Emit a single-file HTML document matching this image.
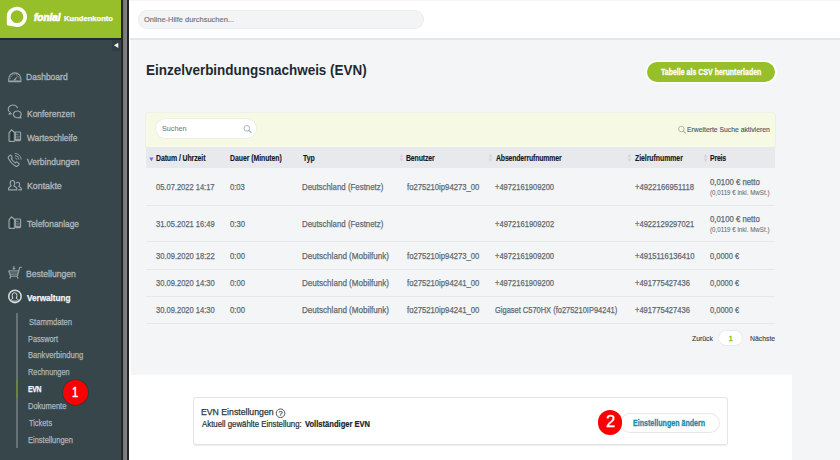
<!DOCTYPE html>
<html><head><meta charset="utf-8"><style>
html,body{margin:0;padding:0;}
body{width:840px;height:460px;overflow:hidden;position:relative;background:#f4f5f7;font-family:"Liberation Sans", sans-serif;}
.b{position:absolute;}
.t{position:absolute;white-space:nowrap;transform-origin:0 0;}
</style></head><body>
<div class="b" style="left:0px;top:0px;width:121px;height:460px;background:#37464b"></div>
<div class="b" style="left:0px;top:0px;width:121px;height:38.2px;background:#97bf2a"></div>
<div class="b" style="left:0px;top:38.2px;width:121px;height:1.8px;background:#1f2a39"></div>
<div class="b" style="left:111.7px;top:40px;width:8.5px;height:11.2px;background:#313f44"></div>
<svg class="b" style="left:0;top:0" width="130" height="60" viewBox="0 0 130 60"><path d="M113.9 45.3 L118.3 42.7 L118.3 47.9 Z" fill="#f2f2f2"/></svg>
<div class="b" style="left:120.5px;top:0px;width:2.1px;height:460px;background:#262626"></div>
<div class="b" style="left:122.6px;top:0px;width:4.6px;height:460px;background:linear-gradient(90deg,#727272,#858585)"></div>
<div class="b" style="left:127.2px;top:0px;width:1.8px;height:460px;background:#232323"></div>
<div class="b" style="left:129px;top:0px;width:711px;height:38.2px;background:#fff"></div>
<div class="b" style="left:129px;top:0px;width:2px;height:460px;background:#fff"></div>
<div class="b" style="left:129px;top:0px;width:711px;height:1px;background:#f6f6f6"></div>
<div class="b" style="left:129.5px;top:38.2px;width:710.5px;height:1.6px;background:#e3e6ea"></div>
<div class="b" style="left:137.5px;top:9.5px;width:286px;height:19.5px;background:#f3f4f6;border-radius:10px;box-shadow:inset 0 0 0 1px #eceef1"></div>
<div class="b" style="left:646.7px;top:61.9px;width:128.5px;height:19.9px;background:#97bf2a;border-radius:10px;box-shadow:0 0 0 1.6px #fff"></div>
<div class="b" style="left:146px;top:112.5px;width:629px;height:34.5px;background:#f6f9e4;border-radius:3px 3px 0 0;box-shadow:0 0 0 0.8px #eceee8"></div>
<div class="b" style="left:156px;top:118.6px;width:100px;height:19px;background:#fff;border-radius:10px;box-shadow:0 0 0 1px #eef1e2"></div>
<svg class="b" style="left:242px;top:124px" width="11" height="10" viewBox="0 0 11 10"><circle cx="4.8" cy="4.4" r="2.8" fill="none" stroke="#9aaab4" stroke-width="0.9"/><path d="M6.9 6.5 L9 8.4" stroke="#9aaab4" stroke-width="1.1" stroke-linecap="round"/></svg>
<svg class="b" style="left:677px;top:125px" width="10" height="10" viewBox="0 0 10 10"><circle cx="4.4" cy="4.0" r="2.8" fill="none" stroke="#aab0a6" stroke-width="0.9"/><path d="M6.4 6.1 L8.6 8.2" stroke="#aab0a6" stroke-width="1.1" stroke-linecap="round"/></svg>
<div class="b" style="left:146px;top:147px;width:629px;height:21px;background:#e7e9ec"></div>
<svg class="b" style="left:148px;top:156px" width="7" height="7" viewBox="0 0 7 7"><path d="M1.2 1.5 L5.6 1.5 L3.4 5.3 Z" fill="#6d6fe0"/></svg>
<svg class="b" style="left:399.1px;top:152.5px" width="5" height="10" viewBox="0 0 5 10"><path d="M0.6 4.3 L2.5 1 L4.4 4.3 Z M0.6 5.5 L2.5 8.9 L4.4 5.5 Z" fill="#d3d6d9"/></svg>
<svg class="b" style="left:488.20000000000005px;top:152.5px" width="5" height="10" viewBox="0 0 5 10"><path d="M0.6 4.3 L2.5 1 L4.4 4.3 Z M0.6 5.5 L2.5 8.9 L4.4 5.5 Z" fill="#d3d6d9"/></svg>
<svg class="b" style="left:627.4px;top:152.5px" width="5" height="10" viewBox="0 0 5 10"><path d="M0.6 4.3 L2.5 1 L4.4 4.3 Z M0.6 5.5 L2.5 8.9 L4.4 5.5 Z" fill="#d3d6d9"/></svg>
<svg class="b" style="left:702.7px;top:152.5px" width="5" height="10" viewBox="0 0 5 10"><path d="M0.6 4.3 L2.5 1 L4.4 4.3 Z M0.6 5.5 L2.5 8.9 L4.4 5.5 Z" fill="#d3d6d9"/></svg>
<div class="b" style="left:146px;top:205px;width:629px;height:1px;background:#e6e9ec"></div>
<div class="b" style="left:146px;top:241px;width:629px;height:1px;background:#e6e9ec"></div>
<div class="b" style="left:146px;top:269px;width:629px;height:1px;background:#e6e9ec"></div>
<div class="b" style="left:146px;top:296px;width:629px;height:1px;background:#e6e9ec"></div>
<div class="b" style="left:146px;top:323px;width:629px;height:1px;background:#e6e9ec"></div>
<div class="b" style="left:717.7px;top:329.9px;width:25.8px;height:15.7px;background:#fff;border-radius:8px;box-shadow:inset 0 0 0 1px #e8eaed"></div>
<div class="b" style="left:129px;top:374.5px;width:663px;height:86px;background:#fff"></div>
<div class="b" style="left:193.3px;top:397.4px;width:535px;height:47.4px;background:#fff;border-radius:3px;box-shadow:inset 0 0 0 1px #e3e5e7, 0 1px 0 #eceeef"></div>
<svg class="b" style="left:275px;top:407.5px" width="11" height="10" viewBox="0 0 11 10"><circle cx="5.55" cy="5.25" r="4.3" fill="none" stroke="#3d4549" stroke-width="0.9"/><text x="5.55" y="7.9" font-family="Liberation Sans" font-size="7.6" text-anchor="middle" fill="#3d4549" stroke="#3d4549" stroke-width="0.2">?</text></svg>
<div class="b" style="left:620px;top:413px;width:99.5px;height:20px;background:#fff;border-radius:10px;box-shadow:inset 0 0 0 1px #e5e8ea"></div>
<div class="b" style="left:597.8px;top:410.2px;width:24.7px;height:24.7px;background:#fa0000;border-radius:50%"></div>
<div class="b" style="left:63.1px;top:379.8px;width:25px;height:25px;background:#fa0000;border-radius:50%;box-shadow:0 0 0 0.8px #2c3a3e"></div>
<div class="b" style="left:16.2px;top:312.8px;width:1.7px;height:134.8px;background:#667276"></div>
<div class="b" style="left:16.2px;top:380.4px;width:1.7px;height:17.3px;background:#6a8739"></div>
<svg class="b" style="left:0;top:0" width="34" height="34" viewBox="0 0 34 34"><path d="M6.75 16.8 L6.9 24.4 Q7 25.2 8 25.4 L14.05 26.5 A10.1 10.1 0 1 0 6.75 16.8 Z M17 10.3 A6.4 6.4 0 1 0 17 23.1 A6.4 6.4 0 1 0 17 10.3 Z" fill="#fff" fill-rule="evenodd"/></svg>
<svg class="b" style="left:6px;top:70px" width="18" height="14" viewBox="6 70 18 14"><path d="M8.7 81.6 L8.7 79 A6.1 6.1 0 0 1 20.9 79 L20.9 81.6 Z" fill="none" stroke="#9ba4a7" stroke-width="1.1" stroke-linejoin="round"/><path d="M9.3 80.4 L20.3 80.4" stroke="#9ba4a7" stroke-width="0.6"/><path d="M10.3 79 A4.5 4.5 0 0 1 19.3 79" fill="none" stroke="#9ba4a7" stroke-width="0.9" stroke-dasharray="1.1 0.9"/><path d="M15.3 80.3 L14.0 79.3 L18.0 75.7 Z" fill="#9ba4a7"/><circle cx="14.65" cy="79.8" r="0.85" fill="#9ba4a7"/></svg>
<svg class="b" style="left:6px;top:103px" width="18" height="17" viewBox="6 103 18 17"><path d="M17.6 108.2 A4.75 4.15 0 1 0 10.3 112.6 L9 114.2 L12 113.7" fill="none" stroke="#9ba4a7" stroke-width="1.15" stroke-linejoin="round"/><path d="M20.1 116.7 A3.95 3.35 0 1 0 18.6 117.5 L21.2 118 Z" fill="none" stroke="#9ba4a7" stroke-width="1.15" stroke-linejoin="round"/></svg>
<svg class="b" style="left:6px;top:128px" width="18" height="16" viewBox="6 128 18 16"><g transform="translate(0 0)"><path d="M11.4 129.8 L14.4 132.3 L14.8 132.8 L14.8 140.4 Q14.8 141.4 13.8 141.4 L10 141.4 Q9 141.4 9 140.4 L9 133.1 L9.4 132.4 Z" fill="none" stroke="#9ba4a7" stroke-width="1.15" stroke-linejoin="round"/><rect x="11" y="132.1" width="1.9" height="8.4" fill="#263236"/><rect x="15.3" y="132" width="5.3" height="8.6" rx="0.8" fill="none" stroke="#9ba4a7" stroke-width="1.15"/><circle cx="16.7" cy="134.3" r="0.55" fill="#9ba4a7"/><circle cx="18" cy="134.3" r="0.55" fill="#9ba4a7"/><path d="M16.1 136.3 H19.8 M16.1 137.9 H19.8" stroke="#9ba4a7" stroke-width="0.55"/><path d="M15.6 139.4 H19.9" stroke="#9ba4a7" stroke-width="1"/></g></svg>
<svg class="b" style="left:6px;top:214.6px" width="18" height="16" viewBox="6 214.6 18 16"><g transform="translate(0 86.6)"><path d="M11.4 129.8 L14.4 132.3 L14.8 132.8 L14.8 140.4 Q14.8 141.4 13.8 141.4 L10 141.4 Q9 141.4 9 140.4 L9 133.1 L9.4 132.4 Z" fill="none" stroke="#9ba4a7" stroke-width="1.15" stroke-linejoin="round"/><rect x="11" y="132.1" width="1.9" height="8.4" fill="#263236"/><rect x="15.3" y="132" width="5.3" height="8.6" rx="0.8" fill="none" stroke="#9ba4a7" stroke-width="1.15"/><circle cx="16.7" cy="134.3" r="0.55" fill="#9ba4a7"/><circle cx="18" cy="134.3" r="0.55" fill="#9ba4a7"/><path d="M16.1 136.3 H19.8 M16.1 137.9 H19.8" stroke="#9ba4a7" stroke-width="0.55"/><path d="M15.6 139.4 H19.9" stroke="#9ba4a7" stroke-width="1"/></g></svg>
<svg class="b" style="left:6px;top:152px" width="18" height="16" viewBox="6 152 18 16"><path d="M10.2 155.2 L8.5 156.6 Q7.9 157.4 8.5 158.8 Q11 163.5 15.6 166.2 Q16.6 166.7 17.4 166 L19 164.6 Q19.4 164.1 18.9 163.6 L17.1 162.1 Q16.6 161.7 16.1 162.1 L15.4 162.8 Q12.9 161.3 11.3 158.7 L12 158 Q12.4 157.4 12 157 L10.9 155.3 Q10.6 154.9 10.2 155.2 Z" fill="none" stroke="#9ba4a7" stroke-width="1.15" stroke-linejoin="round"/><path d="M15.2 157.9 A1.9 1.9 0 0 1 16.8 159.6 M15 155.6 A4.1 4.1 0 0 1 19 159.6 M14.8 153.5 A6.2 6.2 0 0 1 21.2 159.6" fill="none" stroke="#9ba4a7" stroke-width="0.9"/></svg>
<svg class="b" style="left:6px;top:178px" width="18" height="14" viewBox="6 178 18 14"><path d="M12.4 180.5 Q14.6 180.5 14.6 183.2 Q14.6 185 13.8 185.8 L16 187.3 Q16.8 187.8 16.8 188.8 L16.8 189.9 L8.6 189.9 L8.6 188.8 Q8.6 187.8 9.4 187.3 L11.1 185.8 Q10.2 185 10.2 183.2 Q10.2 180.5 12.4 180.5 Z" fill="none" stroke="#9ba4a7" stroke-width="1.15" stroke-linejoin="round"/><path d="M15.9 183.4 Q16.3 182.2 17.9 182.2 Q19.6 182.2 19.6 184.3 Q19.6 185.8 18.9 186.4 L20.7 187.8 Q21.3 188.2 21.3 189 L21.3 189.9 L18.3 189.9" fill="none" stroke="#9ba4a7" stroke-width="1.15" stroke-linejoin="round"/></svg>
<svg class="b" style="left:6px;top:264px" width="18" height="16" viewBox="6 264 18 16"><path d="M8.4 270.9 L19 270.9" stroke="#9ba4a7" stroke-width="1.1"/><path d="M8.8 271 L10.6 276.3 L17.2 276.3 L18.8 271" fill="none" stroke="#9ba4a7" stroke-width="1.1" stroke-linejoin="round"/><path d="M9.6 273 L18.1 273 M10.1 274.7 L17.6 274.7" stroke="#9ba4a7" stroke-width="0.7"/><path d="M18.8 271 L19.5 267.8 Q19.7 267.3 20.3 267.3 L21.4 267.3" fill="none" stroke="#9ba4a7" stroke-width="1.1" stroke-linecap="round"/><path d="M10.6 276.3 L10.1 278.2 M17.2 276.3 L17.7 278.2 M9.4 278 L11 278 M17 278 L18.5 278" stroke="#9ba4a7" stroke-width="1.1"/><path d="M13.9 265.9 L13.9 268.3" stroke="#9ba4a7" stroke-width="1.1"/><path d="M12.1 268 L15.7 268 L13.9 269.9 Z" fill="#9ba4a7"/></svg>
<svg class="b" style="left:6px;top:288px" width="18" height="17" viewBox="6 288 18 17"><circle cx="14.95" cy="296.45" r="6.2" fill="none" stroke="#d9dee0" stroke-width="1.5"/><path d="M10.7 300.8 Q10.8 299.7 11.4 299.3 L13 298.1 Q12.1 297.3 12.1 295.4 Q12.1 292.7 14.55 292.7 Q17 292.7 17 295.4 Q17 297.3 16.1 298.1 L17.7 299.3 Q18.3 299.7 18.4 300.8 M11.6 301.1 L17.5 301.1" fill="none" stroke="#d9dee0" stroke-width="1" stroke-linejoin="round"/></svg>
<div class="t" style="left:34.05px;top:11.62px;font-size:10.72px;line-height:10.72px;font-weight:700;color:#fff;font-style:italic;transform:scaleX(0.9294);-webkit-text-stroke:0.7px #fff;">fonial</div>
<div class="t" style="left:63.61px;top:14.54px;font-size:7.63px;line-height:7.63px;font-weight:700;color:#fff;transform:scaleX(0.9965);-webkit-text-stroke:0.25px #fff;">Kundenkonto</div>
<div class="t" style="left:26.42px;top:73.45px;font-size:9.28px;line-height:9.28px;font-weight:400;color:#acb4b7;transform:scaleX(0.9191);-webkit-text-stroke:0.35px #acb4b7;">Dashboard</div>
<div class="t" style="left:26.52px;top:108.70px;font-size:9.57px;line-height:9.57px;font-weight:400;color:#acb4b7;transform:scaleX(0.8829);-webkit-text-stroke:0.35px #acb4b7;">Konferenzen</div>
<div class="t" style="left:27.20px;top:132.80px;font-size:9.57px;line-height:9.57px;font-weight:400;color:#acb4b7;transform:scaleX(0.8742);-webkit-text-stroke:0.35px #acb4b7;">Warteschleife</div>
<div class="t" style="left:27.20px;top:156.80px;font-size:9.57px;line-height:9.57px;font-weight:400;color:#acb4b7;transform:scaleX(0.8913);-webkit-text-stroke:0.35px #acb4b7;">Verbindungen</div>
<div class="t" style="left:26.50px;top:180.80px;font-size:9.57px;line-height:9.57px;font-weight:400;color:#acb4b7;transform:scaleX(0.9208);-webkit-text-stroke:0.35px #acb4b7;">Kontakte</div>
<div class="t" style="left:27.13px;top:219.33px;font-size:9.42px;line-height:9.42px;font-weight:400;color:#acb4b7;transform:scaleX(0.8866);-webkit-text-stroke:0.35px #acb4b7;">Telefonanlage</div>
<div class="t" style="left:26.31px;top:270.45px;font-size:9.28px;line-height:9.28px;font-weight:400;color:#acb4b7;transform:scaleX(0.9308);-webkit-text-stroke:0.35px #acb4b7;">Bestellungen</div>
<div class="t" style="left:26.86px;top:294.40px;font-size:9.21px;line-height:9.21px;font-weight:700;color:#f4f6f6;transform:scaleX(0.8871);-webkit-text-stroke:0.25px #f4f6f6;">Verwaltung</div>
<div class="t" style="left:28.56px;top:318.34px;font-size:8.70px;line-height:8.70px;font-weight:400;color:#adb5b8;transform:scaleX(0.8744);-webkit-text-stroke:0.25px #adb5b8;">Stammdaten</div>
<div class="t" style="left:28.31px;top:335.17px;font-size:8.70px;line-height:8.70px;font-weight:400;color:#adb5b8;transform:scaleX(0.8419);-webkit-text-stroke:0.25px #adb5b8;">Passwort</div>
<div class="t" style="left:28.29px;top:351.00px;font-size:8.70px;line-height:8.70px;font-weight:400;color:#adb5b8;transform:scaleX(0.8796);-webkit-text-stroke:0.25px #adb5b8;">Bankverbindung</div>
<div class="t" style="left:28.31px;top:367.83px;font-size:8.70px;line-height:8.70px;font-weight:400;color:#adb5b8;transform:scaleX(0.8443);-webkit-text-stroke:0.25px #adb5b8;">Rechnungen</div>
<div class="t" style="left:28.35px;top:384.71px;font-size:8.63px;line-height:8.63px;font-weight:700;color:#f4f6f6;transform:scaleX(0.8000);letter-spacing:-0.430px;-webkit-text-stroke:0.25px #f4f6f6;">EVN</div>
<div class="t" style="left:28.30px;top:402.49px;font-size:8.70px;line-height:8.70px;font-weight:400;color:#adb5b8;transform:scaleX(0.8638);-webkit-text-stroke:0.25px #adb5b8;">Dokumente</div>
<div class="t" style="left:28.75px;top:419.32px;font-size:8.70px;line-height:8.70px;font-weight:400;color:#adb5b8;transform:scaleX(0.8490);-webkit-text-stroke:0.25px #adb5b8;">Tickets</div>
<div class="t" style="left:28.30px;top:436.15px;font-size:8.70px;line-height:8.70px;font-weight:400;color:#adb5b8;transform:scaleX(0.8610);-webkit-text-stroke:0.25px #adb5b8;">Einstellungen</div>
<div class="t" style="left:143.86px;top:15.73px;font-size:8.12px;line-height:8.12px;font-weight:400;color:#6f7376;transform:scaleX(0.9203);-webkit-text-stroke:0.15px #6f7376;">Online-Hilfe durchsuchen...</div>
<div class="t" style="left:145.52px;top:64.19px;font-size:13.96px;line-height:13.96px;font-weight:700;color:#1e2a31;transform:scaleX(0.9652);">Einzelverbindungsnachweis (EVN)</div>
<div class="t" style="left:660.93px;top:67.57px;font-size:8.78px;line-height:8.78px;font-weight:700;color:#ffffff;transform:scaleX(0.8000);letter-spacing:-0.002px;-webkit-text-stroke:0.3px #ffffff;">Tabelle als CSV herunterladen</div>
<div class="t" style="left:162.08px;top:125.38px;font-size:7.83px;line-height:7.83px;font-weight:400;color:#7b8085;transform:scaleX(0.9217);-webkit-text-stroke:0.1px #7b8085;">Suchen</div>
<div class="t" style="left:686.56px;top:126.15px;font-size:7.97px;line-height:7.97px;font-weight:400;color:#4e5b64;transform:scaleX(0.8530);-webkit-text-stroke:0.15px #4e5b64;">Erweiterte Suche aktivieren</div>
<div class="t" style="left:155.55px;top:154.29px;font-size:8.63px;line-height:8.63px;font-weight:700;color:#15191c;transform:scaleX(0.8000);letter-spacing:-0.102px;-webkit-text-stroke:0.15px #15191c;">Datum / Uhrzeit</div>
<div class="t" style="left:230.25px;top:154.29px;font-size:8.63px;line-height:8.63px;font-weight:700;color:#15191c;transform:scaleX(0.8000);letter-spacing:-0.061px;-webkit-text-stroke:0.15px #15191c;">Dauer (Minuten)</div>
<div class="t" style="left:302.93px;top:154.29px;font-size:8.63px;line-height:8.63px;font-weight:700;color:#15191c;transform:scaleX(0.8000);letter-spacing:-0.009px;-webkit-text-stroke:0.15px #15191c;">Typ</div>
<div class="t" style="left:406.15px;top:154.29px;font-size:8.63px;line-height:8.63px;font-weight:700;color:#15191c;transform:scaleX(0.8000);letter-spacing:-0.143px;-webkit-text-stroke:0.15px #15191c;">Benutzer</div>
<div class="t" style="left:495.66px;top:154.29px;font-size:8.63px;line-height:8.63px;font-weight:700;color:#15191c;transform:scaleX(0.8000);letter-spacing:-0.201px;-webkit-text-stroke:0.15px #15191c;">Absenderrufnummer</div>
<div class="t" style="left:634.83px;top:154.29px;font-size:8.63px;line-height:8.63px;font-weight:700;color:#15191c;transform:scaleX(0.8000);letter-spacing:-0.050px;-webkit-text-stroke:0.15px #15191c;">Zielrufnummer</div>
<div class="t" style="left:710.15px;top:154.29px;font-size:8.63px;line-height:8.63px;font-weight:700;color:#15191c;transform:scaleX(0.8000);letter-spacing:-0.249px;-webkit-text-stroke:0.15px #15191c;">Preis</div>
<div class="t" style="left:155.74px;top:182.95px;font-size:9.28px;line-height:9.28px;font-weight:400;color:#606a71;transform:scaleX(0.8117);-webkit-text-stroke:0.25px #606a71;">05.07.2022 14:17</div>
<div class="t" style="left:230.43px;top:182.95px;font-size:9.28px;line-height:9.28px;font-weight:400;color:#606a71;transform:scaleX(0.8244);-webkit-text-stroke:0.25px #606a71;">0:03</div>
<div class="t" style="left:302.37px;top:182.95px;font-size:9.28px;line-height:9.28px;font-weight:400;color:#606a71;transform:scaleX(0.8488);-webkit-text-stroke:0.25px #606a71;">Deutschland (Festnetz)</div>
<div class="t" style="left:406.52px;top:182.95px;font-size:9.28px;line-height:9.28px;font-weight:400;color:#606a71;transform:scaleX(0.8312);-webkit-text-stroke:0.25px #606a71;">fo275210ip94273_00</div>
<div class="t" style="left:495.46px;top:182.95px;font-size:9.28px;line-height:9.28px;font-weight:400;color:#606a71;transform:scaleX(0.8156);-webkit-text-stroke:0.25px #606a71;">+4972161909200</div>
<div class="t" style="left:634.65px;top:182.95px;font-size:9.28px;line-height:9.28px;font-weight:400;color:#606a71;transform:scaleX(0.8321);-webkit-text-stroke:0.25px #606a71;">+4922166951118</div>
<div class="t" style="left:155.74px;top:220.15px;font-size:9.28px;line-height:9.28px;font-weight:400;color:#606a71;transform:scaleX(0.8145);-webkit-text-stroke:0.25px #606a71;">31.05.2021 16:49</div>
<div class="t" style="left:230.43px;top:220.15px;font-size:9.28px;line-height:9.28px;font-weight:400;color:#606a71;transform:scaleX(0.8279);-webkit-text-stroke:0.25px #606a71;">0:30</div>
<div class="t" style="left:302.37px;top:220.15px;font-size:9.28px;line-height:9.28px;font-weight:400;color:#606a71;transform:scaleX(0.8488);-webkit-text-stroke:0.25px #606a71;">Deutschland (Festnetz)</div>
<div class="t" style="left:495.46px;top:220.15px;font-size:9.28px;line-height:9.28px;font-weight:400;color:#606a71;transform:scaleX(0.8167);-webkit-text-stroke:0.25px #606a71;">+4972161909202</div>
<div class="t" style="left:634.66px;top:220.15px;font-size:9.28px;line-height:9.28px;font-weight:400;color:#606a71;transform:scaleX(0.8167);-webkit-text-stroke:0.25px #606a71;">+4922129297021</div>
<div class="t" style="left:155.74px;top:252.15px;font-size:9.28px;line-height:9.28px;font-weight:400;color:#606a71;transform:scaleX(0.8145);-webkit-text-stroke:0.25px #606a71;">30.09.2020 18:22</div>
<div class="t" style="left:230.43px;top:252.15px;font-size:9.28px;line-height:9.28px;font-weight:400;color:#606a71;transform:scaleX(0.8279);-webkit-text-stroke:0.25px #606a71;">0:00</div>
<div class="t" style="left:302.35px;top:252.15px;font-size:9.28px;line-height:9.28px;font-weight:400;color:#606a71;transform:scaleX(0.8710);-webkit-text-stroke:0.25px #606a71;">Deutschland (Mobilfunk)</div>
<div class="t" style="left:406.52px;top:252.15px;font-size:9.28px;line-height:9.28px;font-weight:400;color:#606a71;transform:scaleX(0.8312);-webkit-text-stroke:0.25px #606a71;">fo275210ip94273_00</div>
<div class="t" style="left:495.46px;top:252.15px;font-size:9.28px;line-height:9.28px;font-weight:400;color:#606a71;transform:scaleX(0.8156);-webkit-text-stroke:0.25px #606a71;">+4972161909200</div>
<div class="t" style="left:634.65px;top:252.15px;font-size:9.28px;line-height:9.28px;font-weight:400;color:#606a71;transform:scaleX(0.8306);-webkit-text-stroke:0.25px #606a71;">+4915116136410</div>
<div class="t" style="left:155.74px;top:279.15px;font-size:9.28px;line-height:9.28px;font-weight:400;color:#606a71;transform:scaleX(0.8134);-webkit-text-stroke:0.25px #606a71;">30.09.2020 14:30</div>
<div class="t" style="left:230.43px;top:279.15px;font-size:9.28px;line-height:9.28px;font-weight:400;color:#606a71;transform:scaleX(0.8279);-webkit-text-stroke:0.25px #606a71;">0:00</div>
<div class="t" style="left:302.35px;top:279.15px;font-size:9.28px;line-height:9.28px;font-weight:400;color:#606a71;transform:scaleX(0.8710);-webkit-text-stroke:0.25px #606a71;">Deutschland (Mobilfunk)</div>
<div class="t" style="left:406.52px;top:279.15px;font-size:9.28px;line-height:9.28px;font-weight:400;color:#606a71;transform:scaleX(0.8312);-webkit-text-stroke:0.25px #606a71;">fo275210ip94241_00</div>
<div class="t" style="left:495.46px;top:279.15px;font-size:9.28px;line-height:9.28px;font-weight:400;color:#606a71;transform:scaleX(0.8156);-webkit-text-stroke:0.25px #606a71;">+4972161909200</div>
<div class="t" style="left:634.66px;top:279.15px;font-size:9.28px;line-height:9.28px;font-weight:400;color:#606a71;transform:scaleX(0.8163);-webkit-text-stroke:0.25px #606a71;">+491775427436</div>
<div class="t" style="left:155.74px;top:306.35px;font-size:9.28px;line-height:9.28px;font-weight:400;color:#606a71;transform:scaleX(0.8134);-webkit-text-stroke:0.25px #606a71;">30.09.2020 14:30</div>
<div class="t" style="left:230.43px;top:306.35px;font-size:9.28px;line-height:9.28px;font-weight:400;color:#606a71;transform:scaleX(0.8279);-webkit-text-stroke:0.25px #606a71;">0:00</div>
<div class="t" style="left:302.35px;top:306.35px;font-size:9.28px;line-height:9.28px;font-weight:400;color:#606a71;transform:scaleX(0.8710);-webkit-text-stroke:0.25px #606a71;">Deutschland (Mobilfunk)</div>
<div class="t" style="left:406.52px;top:306.35px;font-size:9.28px;line-height:9.28px;font-weight:400;color:#606a71;transform:scaleX(0.8312);-webkit-text-stroke:0.25px #606a71;">fo275210ip94241_00</div>
<div class="t" style="left:495.43px;top:306.35px;font-size:9.28px;line-height:9.28px;font-weight:400;color:#606a71;transform:scaleX(0.8068);-webkit-text-stroke:0.25px #606a71;">Gigaset C570HX (fo275210IP94241)</div>
<div class="t" style="left:634.66px;top:306.35px;font-size:9.28px;line-height:9.28px;font-weight:400;color:#606a71;transform:scaleX(0.8163);-webkit-text-stroke:0.25px #606a71;">+491775427436</div>
<div class="t" style="left:710.33px;top:177.52px;font-size:8.84px;line-height:8.84px;font-weight:400;color:#606a71;transform:scaleX(0.8808);-webkit-text-stroke:0.25px #606a71;">0,0100 € netto</div>
<div class="t" style="left:710.23px;top:189.47px;font-size:7.25px;line-height:7.25px;font-weight:400;color:#606a71;transform:scaleX(0.8547);-webkit-text-stroke:0.05px #606a71;">(0,0119 € inkl. MwSt.)</div>
<div class="t" style="left:710.33px;top:214.52px;font-size:8.84px;line-height:8.84px;font-weight:400;color:#606a71;transform:scaleX(0.8808);-webkit-text-stroke:0.25px #606a71;">0,0100 € netto</div>
<div class="t" style="left:710.23px;top:226.47px;font-size:7.25px;line-height:7.25px;font-weight:400;color:#606a71;transform:scaleX(0.8547);-webkit-text-stroke:0.05px #606a71;">(0,0119 € inkl. MwSt.)</div>
<div class="t" style="left:710.34px;top:252.15px;font-size:9.28px;line-height:9.28px;font-weight:400;color:#606a71;transform:scaleX(0.8100);-webkit-text-stroke:0.25px #606a71;">0,0000 €</div>
<div class="t" style="left:710.34px;top:279.15px;font-size:9.28px;line-height:9.28px;font-weight:400;color:#606a71;transform:scaleX(0.8100);-webkit-text-stroke:0.25px #606a71;">0,0000 €</div>
<div class="t" style="left:710.34px;top:306.35px;font-size:9.28px;line-height:9.28px;font-weight:400;color:#606a71;transform:scaleX(0.8100);-webkit-text-stroke:0.25px #606a71;">0,0000 €</div>
<div class="t" style="left:691.69px;top:335.03px;font-size:8.12px;line-height:8.12px;font-weight:400;color:#3d474d;transform:scaleX(0.8455);-webkit-text-stroke:0.15px #3d474d;">Zurück</div>
<div class="t" style="left:729.22px;top:335.08px;font-size:8.06px;line-height:8.06px;font-weight:700;color:#8cbf26;transform:scaleX(0.7922);-webkit-text-stroke:0.3px #8cbf26;">1</div>
<div class="t" style="left:750.25px;top:335.03px;font-size:8.12px;line-height:8.12px;font-weight:400;color:#3d474d;transform:scaleX(0.8441);-webkit-text-stroke:0.15px #3d474d;">Nächste</div>
<div class="t" style="left:201.20px;top:406.78px;font-size:9.71px;line-height:9.71px;font-weight:400;color:#2b3338;transform:scaleX(0.8970);-webkit-text-stroke:0.25px #2b3338;">EVN Einstellungen</div>
<div class="t" style="left:201.90px;top:419.74px;font-size:8.70px;line-height:8.70px;font-weight:400;color:#262d32;transform:scaleX(0.9015);-webkit-text-stroke:0.2px #262d32;">Aktuell gewählte Einstellung:</div>
<div class="t" style="left:304.96px;top:419.79px;font-size:8.63px;line-height:8.63px;font-weight:700;color:#1a2328;transform:scaleX(0.8781);-webkit-text-stroke:0.2px #1a2328;">Vollständiger EVN</div>
<div class="t" style="left:633.24px;top:418.99px;font-size:8.63px;line-height:8.63px;font-weight:700;color:#1a89ab;transform:scaleX(0.8224);-webkit-text-stroke:0.3px #1a89ab;">Einstellungen ändern</div>
<div class="t" style="left:72.07px;top:384.02px;font-size:15.22px;line-height:15.22px;font-weight:400;color:#fff;transform:scaleX(0.7251);-webkit-text-stroke:0.5px #fff;">1</div>
<div class="t" style="left:605.66px;top:413.65px;font-size:15.65px;line-height:15.65px;font-weight:400;color:#fff;transform:scaleX(1.0694);-webkit-text-stroke:0.3px #fff;">2</div>
</body></html>
